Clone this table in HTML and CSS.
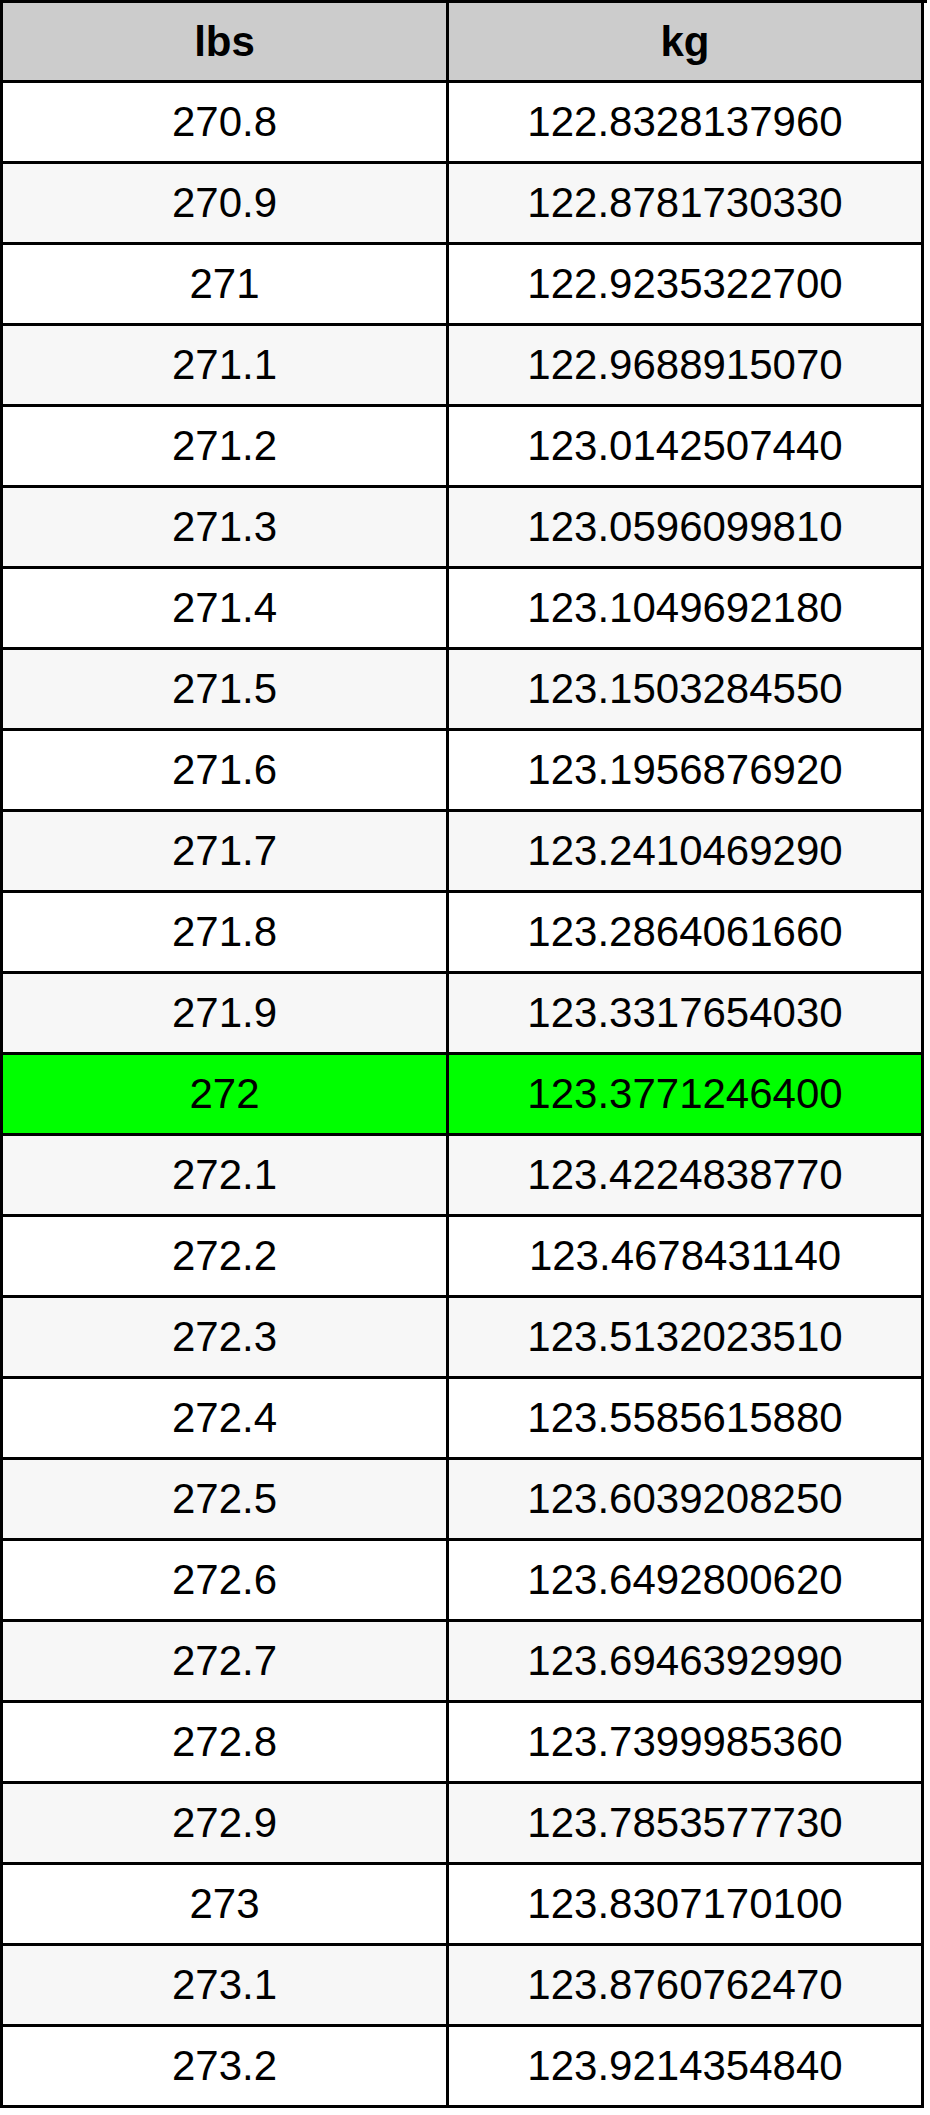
FILE: index.html
```html
<!DOCTYPE html>
<html>
<head>
<meta charset="utf-8">
<title>lbs to kg</title>
<link rel="stylesheet" href="styles.css">
</head>
<body>
<div class="conv">
  <div class="cell head">lbs</div><div class="cell head">kg</div>
  <div class="cell">270.8</div><div class="cell">122.8328137960</div>
  <div class="cell alt">270.9</div><div class="cell alt">122.8781730330</div>
  <div class="cell">271</div><div class="cell">122.9235322700</div>
  <div class="cell alt">271.1</div><div class="cell alt">122.9688915070</div>
  <div class="cell">271.2</div><div class="cell">123.0142507440</div>
  <div class="cell alt">271.3</div><div class="cell alt">123.0596099810</div>
  <div class="cell">271.4</div><div class="cell">123.1049692180</div>
  <div class="cell alt">271.5</div><div class="cell alt">123.1503284550</div>
  <div class="cell">271.6</div><div class="cell">123.1956876920</div>
  <div class="cell alt">271.7</div><div class="cell alt">123.2410469290</div>
  <div class="cell">271.8</div><div class="cell">123.2864061660</div>
  <div class="cell alt">271.9</div><div class="cell alt">123.3317654030</div>
  <div class="cell hl">272</div><div class="cell hl">123.3771246400</div>
  <div class="cell alt">272.1</div><div class="cell alt">123.4224838770</div>
  <div class="cell">272.2</div><div class="cell">123.4678431140</div>
  <div class="cell alt">272.3</div><div class="cell alt">123.5132023510</div>
  <div class="cell">272.4</div><div class="cell">123.5585615880</div>
  <div class="cell alt">272.5</div><div class="cell alt">123.6039208250</div>
  <div class="cell">272.6</div><div class="cell">123.6492800620</div>
  <div class="cell alt">272.7</div><div class="cell alt">123.6946392990</div>
  <div class="cell">272.8</div><div class="cell">123.7399985360</div>
  <div class="cell alt">272.9</div><div class="cell alt">123.7853577730</div>
  <div class="cell">273</div><div class="cell">123.8307170100</div>
  <div class="cell alt">273.1</div><div class="cell alt">123.8760762470</div>
  <div class="cell">273.2</div><div class="cell">123.9214354840</div>
</div>
</body>
</html>
```
FILE: styles.css
```css
html, body {
  margin: 0;
  padding: 0;
  background: #ffffff;
}

.conv {
  display: grid;
  grid-template-columns: 446px 475px;
  width: 924px;
  border-top: 3px solid #000;
  border-left: 3px solid #000;
  font-family: "Liberation Sans", Arial, sans-serif;
  font-size: 42px;
  color: #000;
}

.cell {
  height: 78px;
  border-right: 3px solid #000;
  border-bottom: 3px solid #000;
  display: flex;
  align-items: center;
  justify-content: center;
  background: #ffffff;
}

.cell.head {
  height: 77px;
  background: #cccccc;
  font-weight: bold;
}

.cell.alt {
  background: #f7f7f7;
}

.cell.hl {
  background: #00ff00;
}
```
